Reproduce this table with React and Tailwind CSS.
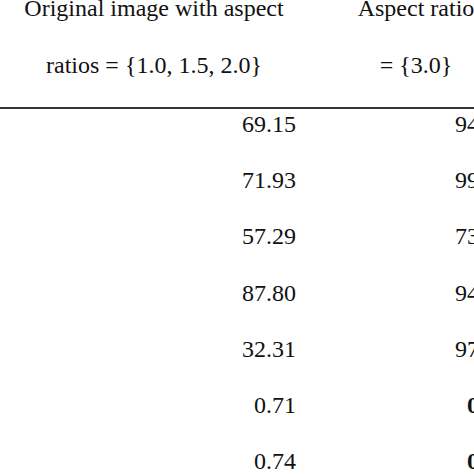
import React from 'react';

const rows = [
  { orig: '69.15', aspect: '94.36' },
  { orig: '71.93', aspect: '99.12' },
  { orig: '57.29', aspect: '73.58' },
  { orig: '87.80', aspect: '94.27' },
  { orig: '32.31', aspect: '97.05' },
  { orig: '0.71', aspect: '0.93', bold: true },
  { orig: '0.74', aspect: '0.95', bold: true },
];

const App = () => {
  return (
    <div
      className="w-[474px] h-[474px] overflow-hidden bg-white text-[#111] text-[24px]"
      style={{ fontFamily: '"Liberation Serif", "Times New Roman", serif' }}
    >
      <div className="w-[524px]">
        <div className="grid grid-cols-[308px_216px] -mt-[20px] leading-[57px] pb-[13px]">
          <div className="text-center whitespace-nowrap">
            Original image with aspect
            <br />
            ratios = {'{'}1.0, 1.5, 2.0{'}'}
          </div>
          <div className="text-center whitespace-nowrap">
            Aspect ratio
            <br />
            = {'{'}3.0{'}'}
          </div>
        </div>
        <div className="h-[2px] bg-[#333]" />
        <div className="pt-[3px]">
          {rows.map((r) => (
            <div key={r.orig} className="grid grid-cols-[308px_216px] h-[56.2px] leading-[24px]">
              <div className="text-right pr-[12px]">{r.orig}</div>
              <div className={`text-right pr-[15px] ${r.bold ? 'font-bold' : ''}`}>{r.aspect}</div>
            </div>
          ))}
        </div>
      </div>
    </div>
  );
};

export default App;
